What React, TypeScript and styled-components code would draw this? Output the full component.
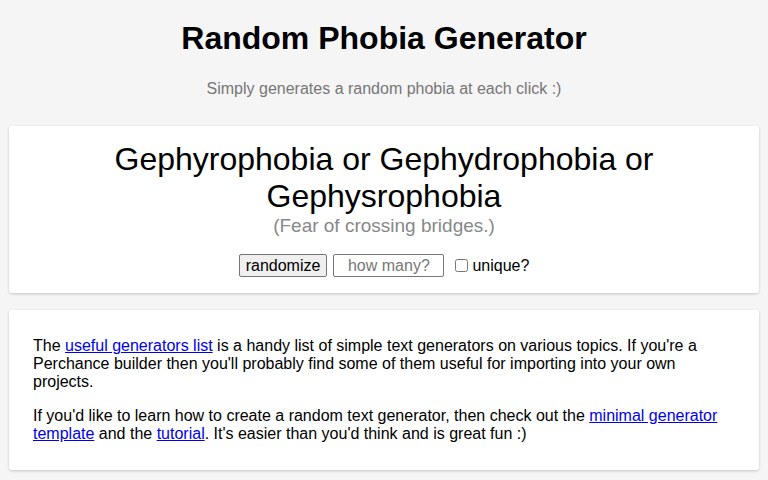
import styled, { createGlobalStyle } from "styled-components";
import React from "react";

const GlobalStyle = createGlobalStyle`
  body {
    margin: 0;
    background-color: #f5f5f5;
    font-family: "Liberation Sans", Arial, sans-serif;
  }
`;

const Page = styled.div`
  padding: 0 9px 9px 9px;
`;

const Title = styled.h1`
  margin: 0;
  padding-top: 20px;
  font-size: 32px;
  line-height: 37px;
  text-align: center;
  color: #000;
`;

const Subtitle = styled.p`
  margin: 23px 0 28px 0;
  font-size: 16px;
  line-height: 18px;
  text-align: center;
  color: #777;
`;

const Card = styled.div<{ $pad: string }>`
  background: white;
  border-radius: 3px;
  box-shadow: 0 1px 3px rgba(0, 0, 0, 0.2);
  padding: ${(p) => p.$pad};
  margin-bottom: 17px;
`;

const Output = styled.div`
  font-size: 32px;
  line-height: 37px;
  text-align: center;
  color: #000;
  padding: 0 90px;
`;

const Meaning = styled.div`
  font-size: 19px;
  line-height: 22px;
  text-align: center;
  color: #888;
`;

const Controls = styled.div`
  display: flex;
  justify-content: center;
  align-items: center;
  margin-top: 17px;
  gap: 6px;
`;

const Button = styled.button`
  font-family: "Liberation Sans", Arial, sans-serif;
  font-size: 16px;
  height: 23px;
  padding: 0 6px;
  background: #efefef;
  border: 1px solid #767676;
  border-radius: 2px;
  color: #000;
`;

const CountInput = styled.input`
  font-family: "Liberation Sans", Arial, sans-serif;
  font-size: 16px;
  width: 111px;
  height: 23px;
  box-sizing: border-box;
  text-align: center;
  border: 1px solid #767676;
  border-radius: 2px;
  padding: 0;
  &::placeholder {
    color: #777;
  }
`;

const CheckLabel = styled.label`
  display: flex;
  align-items: center;
  font-size: 16px;
  color: #000;
  margin-left: 2px;
  input {
    margin: 0 4px 0 3px;
    width: 13px;
    height: 13px;
  }
`;

const Para = styled.p`
  margin: 0 0 16px 0;
  font-size: 16px;
  line-height: 18px;
  color: #000;
  &:last-child {
    margin-bottom: 0;
  }
  a {
    color: #0000ee;
  }
`;

const App = () => {
  return (
    <Page>
      <GlobalStyle />
      <Title>Random Phobia Generator</Title>
      <Subtitle>Simply generates a random phobia at each click :)</Subtitle>
      <Card $pad="15px 0 16px 0">
        <Output>Gephyrophobia or Gephydrophobia or Gephysrophobia</Output>
        <Meaning>(Fear of crossing bridges.)</Meaning>
        <Controls>
          <Button>randomize</Button>
          <CountInput placeholder="how many?" />
          <CheckLabel>
            <input type="checkbox" />
            unique?
          </CheckLabel>
        </Controls>
      </Card>
      <Card $pad="27px 24px 27px 24px">
        <Para>
          The <a href="#">useful generators list</a> is a handy list of simple
          text generators on various topics. If you're a Perchance builder then
          you'll probably find some of them useful for importing into your own
          projects.
        </Para>
        <Para>
          If you'd like to learn how to create a random text generator, then
          check out the <a href="#">minimal generator template</a> and the{" "}
          <a href="#">tutorial</a>. It's easier than you'd think and is great
          fun :)
        </Para>
      </Card>
    </Page>
  );
};

export default App;
